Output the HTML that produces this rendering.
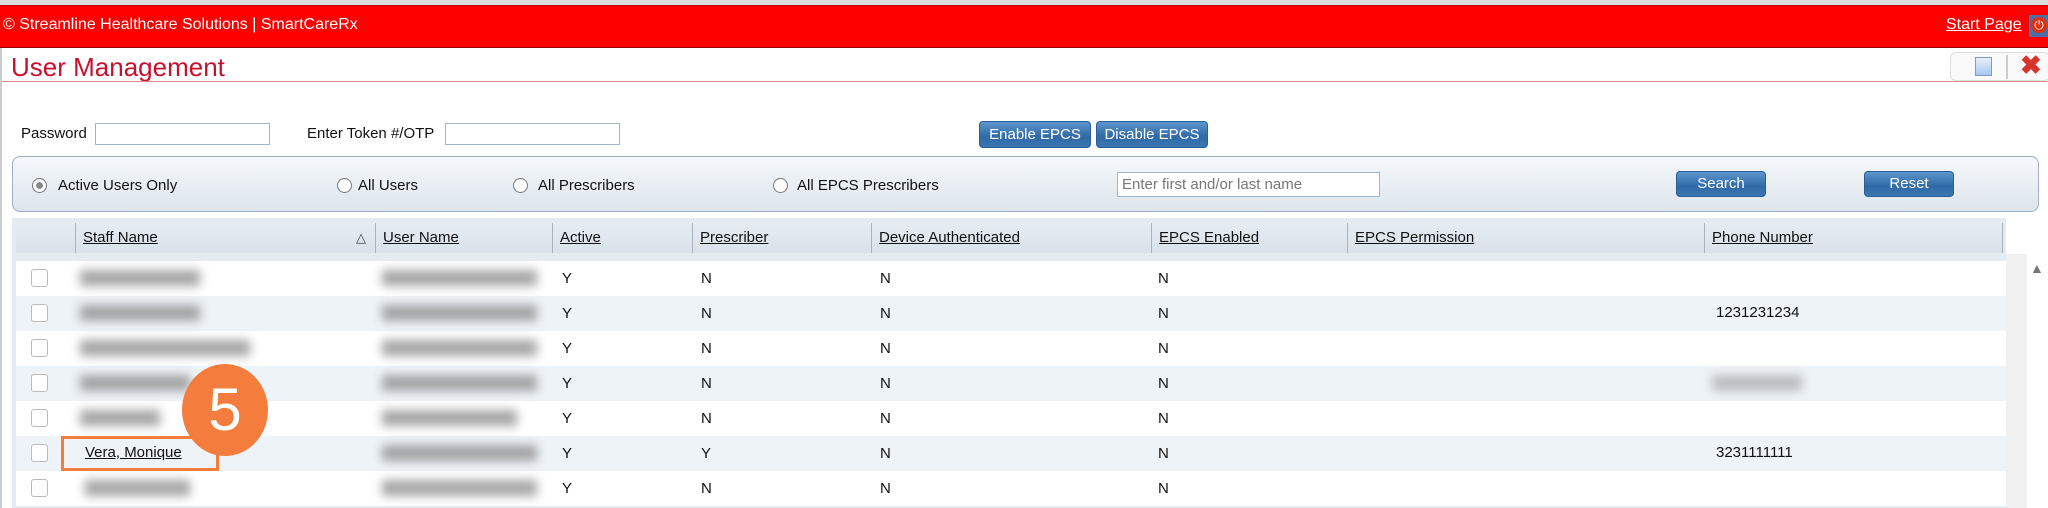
<!DOCTYPE html>
<html><head><meta charset="utf-8"><style>
*{margin:0;padding:0;box-sizing:border-box}
body{width:2048px;height:508px;overflow:hidden;background:#fff;font-family:"Liberation Sans",sans-serif;font-size:15px;color:#111;position:relative}
.a{position:absolute}
.u{text-decoration:underline}
.btn{position:absolute;background:linear-gradient(#5d95cc,#2f6aa6 60%,#3a76b2);border:1px solid #2a5f96;border-radius:4px;color:#fff;text-align:center;font-size:15px}
.inp{position:absolute;border:1px solid #9fb5cc;background:#fff}
.rad{position:absolute;width:15px;height:15px;border:1px solid #777;border-radius:50%;background:#fff}
.hd{position:absolute;top:223px;height:30px;line-height:30px;padding-left:7px;border-left:1px solid #a9b3bd}
.cb{position:absolute;left:31px;width:17px;height:18px;border:1px solid #bbb;border-radius:3px;background:#fff}
.bl{position:absolute;background:#888;filter:blur(5px);height:16px;opacity:.75}
</style></head><body>
<div class="a" style="left:0;top:0;width:2048px;height:5px;background:#ddd"></div>
<div class="a" style="left:0;top:5px;width:2048px;height:43px;background:#ff0000;border-top:1px solid #b00;border-bottom:1px solid #900"></div>
<div class="a" style="left:3px;top:16px;color:#fff;font-size:16px">© Streamline Healthcare Solutions | SmartCareRx</div>
<div class="a u" style="left:1946px;top:16px;color:#fff;font-size:16px">Start Page</div>
<div class="a" style="left:2029px;top:15px;width:19px;height:22px;background:#4a6fa5"><div style="margin:2px;width:16px;height:16px;border-radius:50%;background:#e03010;color:#fff;font-size:12px;line-height:16px;text-align:center">⏻</div></div>
<div class="a" style="left:0;top:48px;width:2px;height:460px;background:#ccc"></div>
<div class="a" style="left:11px;top:52px;color:#c8102e;font-size:26px">User Management</div>
<div class="a" style="left:2px;top:81px;width:2046px;height:1px;background:#d88"></div>
<div class="a" style="left:1950px;top:52px;width:100px;height:29px;border:1px solid #ddd;border-radius:6px;background:#fafafa"></div>
<div class="a" style="left:1975px;top:57px;width:17px;height:19px;background:linear-gradient(#e6f0fb,#a9c8ee);border:1px solid #7a9cc8"></div>
<div class="a" style="left:2006px;top:55px;width:2px;height:24px;background:#ccc"></div>
<div class="a" style="left:2020px;top:50px;color:#d9342b;font-size:26px;font-weight:bold">✖</div>
<div class="a" style="left:21px;top:125px">Password</div>
<div class="inp" style="left:95px;top:123px;width:175px;height:22px"></div>
<div class="a" style="left:307px;top:125px">Enter Token #/OTP</div>
<div class="inp" style="left:445px;top:123px;width:175px;height:22px"></div>
<div class="btn" style="left:979px;top:121px;width:112px;height:27px;line-height:25px">Enable EPCS</div>
<div class="btn" style="left:1096px;top:121px;width:112px;height:27px;line-height:25px">Disable EPCS</div>
<div class="a" style="left:12px;top:156px;width:2027px;height:56px;border:1px solid #9fb0c2;border-radius:8px;background:linear-gradient(#f5f8fb,#dde5ec)"></div>
<div class="rad" style="left:32px;top:178px"><div style="margin:3px;width:7px;height:7px;border-radius:50%;background:#888"></div></div>
<div class="a" style="left:58px;top:177px">Active Users Only</div>
<div class="rad" style="left:337px;top:178px"></div><div class="a" style="left:358px;top:177px">All Users</div>
<div class="rad" style="left:513px;top:178px"></div><div class="a" style="left:538px;top:177px">All Prescribers</div>
<div class="rad" style="left:773px;top:178px"></div><div class="a" style="left:797px;top:177px">All EPCS Prescribers</div>
<div class="inp" style="left:1117px;top:172px;width:263px;height:25px;color:#777;padding:3px 4px;font-size:15px">Enter first and/or last name</div>
<div class="btn" style="left:1676px;top:171px;width:90px;height:26px;line-height:24px">Search</div>
<div class="btn" style="left:1864px;top:171px;width:90px;height:26px;line-height:24px">Reset</div>
<div class="a" style="left:12px;top:218px;width:1994px;height:290px;background:#e4ebf1"></div>
<div class="a" style="left:16px;top:223px;width:1986px;height:30px;background:linear-gradient(#e6ecf2,#d9e2ea)"></div>
<div class="hd u" style="left:75px;width:300px">Staff Name</div>
<div class="a" style="left:356px;top:230px;font-size:13px;color:#444">△</div>
<div class="hd u" style="left:375px">User Name</div>
<div class="hd u" style="left:552px">Active</div>
<div class="hd u" style="left:692px">Prescriber</div>
<div class="hd u" style="left:871px">Device Authenticated</div>
<div class="hd u" style="left:1151px">EPCS Enabled</div>
<div class="hd u" style="left:1347px">EPCS Permission</div>
<div class="hd u" style="left:1704px">Phone Number</div>
<div class="a" style="left:2002px;top:223px;width:1px;height:30px;background:#a9b3bd"></div>
<div class="a" style="left:2006px;top:254px;width:42px;height:254px;background:#f0f0f0"></div>
<div class="a" style="left:2027px;top:254px;width:21px;height:254px;background:#fff"></div>
<div class="a" style="left:2030px;top:260px;font-size:14px;color:#777">▲</div>

<div class="a" style="left:16px;top:261px;width:1990px;height:35px;background:#fff"></div>
<div class="a" style="left:16px;top:296px;width:1990px;height:35px;background:#eef3f8"></div>
<div class="a" style="left:16px;top:331px;width:1990px;height:35px;background:#fff"></div>
<div class="a" style="left:16px;top:366px;width:1990px;height:35px;background:#eef3f8"></div>
<div class="a" style="left:16px;top:401px;width:1990px;height:35px;background:#fff"></div>
<div class="a" style="left:16px;top:436px;width:1990px;height:35px;background:#eef3f8"></div>
<div class="a" style="left:16px;top:471px;width:1990px;height:35px;background:#fff"></div>

<div class="cb" style="top:269px"></div><div class="cb" style="top:304px"></div><div class="cb" style="top:339px"></div><div class="cb" style="top:374px"></div><div class="cb" style="top:409px"></div><div class="cb" style="top:444px"></div><div class="cb" style="top:479px"></div>

<div class="bl" style="left:80px;top:270px;width:120px"></div>
<div class="bl" style="left:80px;top:305px;width:120px"></div>
<div class="bl" style="left:80px;top:340px;width:170px"></div>
<div class="bl" style="left:80px;top:375px;width:110px"></div>
<div class="bl" style="left:80px;top:410px;width:80px"></div>
<div class="bl" style="left:85px;top:480px;width:105px"></div>
<div class="bl" style="left:382px;top:270px;width:155px"></div>
<div class="bl" style="left:382px;top:305px;width:155px"></div>
<div class="bl" style="left:382px;top:340px;width:155px"></div>
<div class="bl" style="left:382px;top:375px;width:155px"></div>
<div class="bl" style="left:382px;top:410px;width:135px"></div>
<div class="bl" style="left:382px;top:445px;width:155px"></div>
<div class="bl" style="left:382px;top:480px;width:155px"></div>
<div class="bl" style="left:1712px;top:375px;width:90px;opacity:.5"></div>

<div class="a" style="left:562px;top:261px;line-height:35px">Y<br>Y<br>Y<br>Y<br>Y<br>Y<br>Y</div>
<div class="a" style="left:701px;top:261px;line-height:35px">N<br>N<br>N<br>N<br>N<br>Y<br>N</div>
<div class="a" style="left:880px;top:261px;line-height:35px">N<br>N<br>N<br>N<br>N<br>N<br>N</div>
<div class="a" style="left:1158px;top:261px;line-height:35px">N<br>N<br>N<br>N<br>N<br>N<br>N</div>
<div class="a" style="left:1716px;top:304px">1231231234</div>
<div class="a" style="left:1716px;top:444px">3231111111</div>
<div class="a u" style="left:85px;top:444px">Vera, Monique</div>
<div class="a" style="left:61px;top:436px;width:158px;height:35px;border:3px solid #f47c3c"></div>
<div class="a" style="left:182px;top:364px;width:86px;height:92px;border-radius:50%;background:#f47c3c;color:#fff;font-size:60px;text-align:center;line-height:92px">5</div>
</body></html>
